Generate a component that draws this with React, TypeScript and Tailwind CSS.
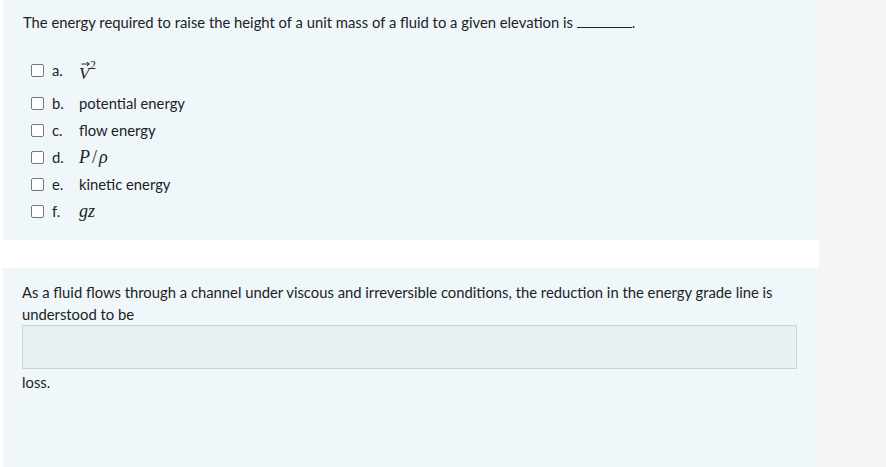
import React from "react";

const font = { fontFamily: "Lato, 'Open Sans', sans-serif" };
const serif = { fontFamily: "'Liberation Serif', 'DejaVu Serif', serif" };

function Box() {
  return (
    <span className="inline-block w-[13px] h-[13px] rounded-[2px] border border-[#767676] bg-white shrink-0" />
  );
}

function Math({ children }: { children: React.ReactNode }) {
  return (
    <span className="text-[18px] italic text-[#1d2125]" style={serif}>
      {children}
    </span>
  );
}

function VecV2() {
  return (
    <span className="relative inline-block translate-y-[3px] text-[17px] italic leading-[16px]" style={serif}>
      V
      <svg className="absolute left-[2px] top-[-5px]" width="9" height="6" viewBox="0 0 9 6">
        <path d="M0.5 3 H8 M5.8 1 L8.3 3 L5.8 5" stroke="#1d2125" strokeWidth="1" fill="none" />
      </svg>
      <span className="absolute left-[11px] top-[-9px] text-[12px] not-italic" style={serif}>
        2
      </span>
    </span>
  );
}

const options: { key: string; body: React.ReactNode }[] = [
  { key: "a.", body: <VecV2 /> },
  { key: "b.", body: "potential energy" },
  { key: "c.", body: "flow energy" },
  { key: "d.", body: <Math>P<span className="mx-[2px] not-italic">/</span>ρ</Math> },
  { key: "e.", body: "kinetic energy" },
  { key: "f.", body: <Math>gz</Math> },
];

export default function App() {
  return (
    <div className="flex h-[467px] w-[886px] bg-white text-[14.8px] text-[#1d2125]" style={font}>
      <div className="w-[3px]" />
      <div className="flex w-[816px] flex-col">
        <div className="h-[240px] bg-[#eff7fa] pl-[20px] pt-[11px]">
          <p className="leading-[22px]">
            The energy required to raise the height of a unit mass of a fluid to a given elevation is{" "}
            <span className="inline-block w-[55px] border-b border-[#1d2125] align-baseline" />.
          </p>
          <div className="mt-[24px] flex flex-col pl-[8px]">
            {options.map((o, i) => (
              <div key={o.key} className={`flex h-[27px] items-center ${i === 0 ? "mb-[6px]" : ""}`}>
                <Box />
                <span className="ml-[8px] w-[27px]">{o.key}</span>
                <span>{o.body}</span>
              </div>
            ))}
          </div>
        </div>
        <div className="h-[28px] bg-white" />
        <div className="flex-1 bg-[#eff7fa] pl-[19px] pr-[21px] pt-[13px]">
          <p className="leading-[22px]">
            As a fluid flows through a channel under viscous and irreversible conditions, the reduction in the energy grade line is understood to be
          </p>
          <div className="h-[44px] w-[775px] border border-[#cdd4d8] bg-[#e8f0f3]" />
          <p className="mt-[2px] leading-[22px]">loss.</p>
        </div>
      </div>
      <div className="flex-1 bg-[#f5f5f5]" />
    </div>
  );
}
